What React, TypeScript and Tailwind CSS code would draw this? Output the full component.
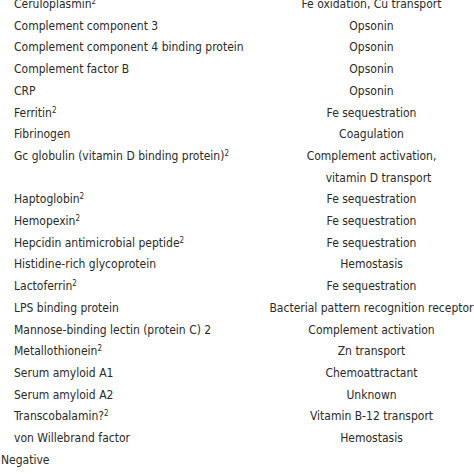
import React from "react"

type Row = {
  name: string
  sup?: boolean
  fn: string[]
}

const rows: Row[] = [
  { name: "Ceruloplasmin", sup: true, fn: ["Fe oxidation, Cu transport"] },
  { name: "Complement component 3", fn: ["Opsonin"] },
  { name: "Complement component 4 binding protein", fn: ["Opsonin"] },
  { name: "Complement factor B", fn: ["Opsonin"] },
  { name: "CRP", fn: ["Opsonin"] },
  { name: "Ferritin", sup: true, fn: ["Fe sequestration"] },
  { name: "Fibrinogen", fn: ["Coagulation"] },
  { name: "Gc globulin (vitamin D binding protein)", sup: true, fn: ["Complement activation,", "vitamin D transport"] },
  { name: "Haptoglobin", sup: true, fn: ["Fe sequestration"] },
  { name: "Hemopexin", sup: true, fn: ["Fe sequestration"] },
  { name: "Hepcidin antimicrobial peptide", sup: true, fn: ["Fe sequestration"] },
  { name: "Histidine-rich glycoprotein", fn: ["Hemostasis"] },
  { name: "Lactoferrin", sup: true, fn: ["Fe sequestration"] },
  { name: "LPS binding protein", fn: ["Bacterial pattern recognition receptor"] },
  { name: "Mannose-binding lectin (protein C) 2", fn: ["Complement activation"] },
  { name: "Metallothionein", sup: true, fn: ["Zn transport"] },
  { name: "Serum amyloid A1", fn: ["Chemoattractant"] },
  { name: "Serum amyloid A2", fn: ["Unknown"] },
  { name: "Transcobalamin?", sup: true, fn: ["Vitamin B-12 transport"] },
  { name: "von Willebrand factor", fn: ["Hemostasis"] },
]

export default function App() {
  return (
    <div
      className="h-[474px] w-[474px] overflow-hidden bg-white text-[12px] leading-[21.7px] text-[#2a2a2a]"
      style={{ fontFamily: '"DejaVu Sans Condensed", "Liberation Sans", sans-serif' }}
    >
      <div className="-mt-[6px]">
        {rows.map((r) => (
          <div key={r.name} className="grid grid-cols-[269px_205px]">
            <div className="pl-[14px] whitespace-nowrap">
              {r.name}
              {r.sup && <sup className="text-[8px]">2</sup>}
            </div>
            <div className="flex flex-col items-center whitespace-nowrap">
              {r.fn.map((f, i) => (
                <span key={f} className={i > 0 ? "pl-[14px]" : ""}>
                  {f}
                </span>
              ))}
            </div>
          </div>
        ))}
        <div className="pl-[1px]">Negative</div>
      </div>
    </div>
  )
}
